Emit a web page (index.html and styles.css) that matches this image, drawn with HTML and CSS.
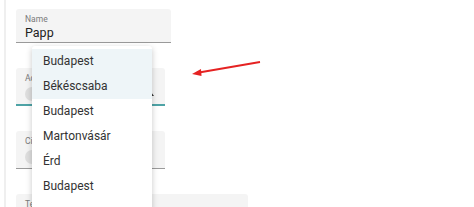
FILE: index.html
```html
<!DOCTYPE html>
<html lang="hu">
<head>
    <meta charset="UTF-8">
    <meta name="viewport" content="width=device-width, initial-scale=1.0">
    <title>Űrlap</title>
    <link rel="stylesheet" href="styles.css">
</head>
<body>
    <div class="page">
        <div class="form">
            <div class="field field-name">
                <span class="field-label">Name</span>
                <span class="field-value">Papp</span>
            </div>
            <div class="field field-select is-focused">
                <span class="field-label">Address</span>
                <div class="field-row">
                    <span class="chip">Budapest</span>
                    <span class="caret"></span>
                </div>

                <ul class="menu">
                    <li class="menu-item is-selected">Budapest</li>
                    <li class="menu-item is-active">Békéscsaba</li>
                    <li class="menu-item">Budapest</li>
                    <li class="menu-item">Martonvásár</li>
                    <li class="menu-item">Érd</li>
                    <li class="menu-item">Budapest</li>
                </ul>
            </div>
            <div class="field field-select">
                <span class="field-label">City</span>
                <div class="field-row">
                    <span class="chip">Budapest</span>
                </div>
            </div>
            <div class="field field-wide">
                <span class="field-label">Tel</span>
            </div>
        </div>

        <svg class="pointer" width="80" height="30" viewBox="0 0 80 30">
            <line x1="73" y1="11" x2="12" y2="21.5" stroke="#e52222" stroke-width="1.8"/>
            <path d="M5 23 L14 18 L14.5 25 Z" fill="#e52222"/>
        </svg>
    </div>
</body>
</html>
```

FILE: styles.css
```css
body {
    margin: 0;
    background: #fff;
    font-family: Roboto, "Liberation Sans", Arial, sans-serif;
    color: #333;
    overflow: hidden;
}

.page {
    position: relative;
    height: 207px;
    margin-left: 4px;
    border-left: 2px solid #efefef;
    padding: 9px 0 0 10px;
}

.form {
    display: flex;
    flex-direction: column;
    align-items: flex-start;
    gap: 25px;
}

.field {
    position: relative;
    box-sizing: border-box;
    width: 155px;
    background: #f4f4f4;
    border-radius: 3px 3px 0 0;
    border-bottom: 1px solid #9a9a9a;
    padding: 5px 9px 0 9px;
}

.field-name {
    height: 34px;
}

.field-select {
    width: 149px;
    height: 38px;
}

.field-select.is-focused {
    border-bottom: 2px solid #4ea3a6;
}

.field-wide {
    width: 232px;
    height: 14px;
    border-bottom: none;
}

.field-label {
    display: block;
    font-size: 8.5px;
    line-height: 11px;
    color: #7a7a7a;
}

.field-value {
    display: block;
    font-size: 12.5px;
    line-height: 15px;
    color: #222;
}

.field-row {
    display: flex;
    align-items: center;
    justify-content: space-between;
    margin-top: 3px;
}

.chip {
    display: inline-block;
    background: #dedede;
    color: #555;
    border-radius: 8px;
    font-size: 9px;
    line-height: 14px;
    padding: 0 7px;
}

.caret {
    width: 0;
    height: 0;
    margin-right: 2px;
    border-left: 3px solid transparent;
    border-right: 3px solid transparent;
    border-bottom: 4px solid #333;
}

.menu {
    position: absolute;
    left: 16px;
    top: -22px;
    z-index: 2;
    width: 120px;
    margin: 0;
    padding: 3px 0 12px 0;
    list-style: none;
    background: #fff;
    box-shadow: 0 2px 6px rgba(0, 0, 0, 0.22);
    border-radius: 3px;
}

.menu-item {
    height: 25px;
    line-height: 25px;
    padding-left: 11px;
    font-size: 12px;
    color: #333;
}

.menu-item.is-selected,
.menu-item.is-active {
    background: #eef5f8;
}

.pointer {
    position: absolute;
    left: 181px;
    top: 51px;
}
```
